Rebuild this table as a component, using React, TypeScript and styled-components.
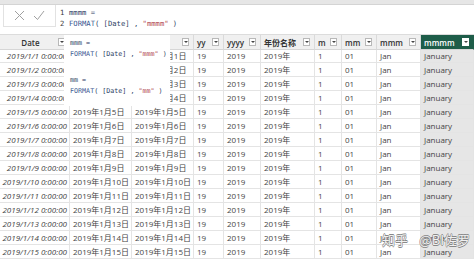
import React from "react";
import styled, { createGlobalStyle } from "styled-components";

const Global = createGlobalStyle`
  html, body { margin: 0; padding: 0; background: #fff; overflow: hidden; }
`;

const Page = styled.div`
  position: relative;
  width: 474px;
  height: 259px;
  overflow: hidden;
  background: #fff;
  font-family: "Open Sans", "Noto Sans CJK SC", sans-serif;
`;

const TopStrip = styled.div`
  height: 4px;
  background: #e6e6e6;
  border-bottom: 1px solid #d4d4d4;
`;

const FormulaBar = styled.div`
  display: flex;
  align-items: flex-start;
  height: 29px;
  background: #fff;
`;

const ActionBox = styled.div`
  margin: 0 0 0 3px;
  width: 51px;
  height: 21px;
  border: 1px solid #e2e2e2;
  border-top: none;
  display: flex;
  align-items: center;
  justify-content: center;
  gap: 8px;
`;

const Code = styled.div`
  margin-left: 4px;
  padding-top: 2px;
  font-family: "DejaVu Sans Mono", "Liberation Mono", monospace;
  font-size: 7.2px;
  line-height: 11px;
  color: #2c3e63;
`;

const CodeLine = styled.div`
  display: flex;
  white-space: pre;
`;

const LineNo = styled.span`
  width: 9px;
  color: #3a3a3a;
`;

const Str = styled.span`
  color: #b2474f;
`;

const Fn = styled.span`
  color: #3b5a92;
`;

const Table = styled.div`
  display: grid;
  grid-template-columns: 70px 62px 62px 30px 37px 54px 27px 35px 44px 53px;
  grid-auto-rows: 14px;
  border-top: 1px solid #dcdcdc;
`;

const HeadCell = styled.div<{ $active?: boolean }>`
  height: 15px;
  display: flex;
  align-items: center;
  position: relative;
  padding: 0 4px 0 3px;
  box-sizing: border-box;
  background: ${(p) => (p.$active ? "#1e5d49" : "#f0f0f0")};
  color: ${(p) => (p.$active ? "#fff" : "#333")};
  border-right: 1px solid ${(p) => (p.$active ? "#1e5d49" : "#dadada")};
  border-bottom: 1px solid #d6d6d6;
  font-size: 8px;
  font-weight: 600;
  white-space: nowrap;
  overflow: hidden;
`;

const HeadLabel = styled.span<{ $center?: boolean }>`
  flex: 1;
  text-align: ${(p) => (p.$center ? "center" : "left")};
`;

const Drop = styled.span<{ $active?: boolean }>`
  width: 7px;
  height: 8px;
  box-sizing: border-box;
  border: 1px solid ${(p) => (p.$active ? "#fff" : "#b8b8b8")};
  background: #fff;
  display: flex;
  align-items: center;
  justify-content: center;
  flex: none;
  &::after {
    content: "";
    border-left: 2px solid transparent;
    border-right: 2px solid transparent;
    border-top: 2px solid #444;
  }
`;

const Cell = styled.div<{ $right?: boolean; $italic?: boolean; $active?: boolean }>`
  height: 14px;
  box-sizing: border-box;
  display: flex;
  align-items: center;
  justify-content: ${(p) => (p.$right ? "flex-end" : "flex-start")};
  padding: ${(p) => (p.$right ? "0 2px 0 0" : "0 0 0 3px")};
  border-right: 1px solid #e4e4e4;
  border-bottom: 1px solid #e4e4e4;
  background: ${(p) => (p.$active ? "#e6e6e6" : "#fff")};
  color: #444;
  font-size: 8px;
  font-style: ${(p) => (p.$italic ? "italic" : "normal")};
  white-space: nowrap;
  overflow: hidden;
`;

const Popup = styled.div`
  position: absolute;
  left: 64px;
  top: 35px;
  width: 106px;
  height: 71px;
  background: #fff;
  padding: 3px 0 0 6px;
  box-sizing: border-box;
  font-family: "DejaVu Sans Mono", "Liberation Mono", monospace;
  font-size: 6.7px;
  line-height: 11px;
  color: #2c3e63;
  display: flex;
  flex-direction: column;
  gap: 15px;
  white-space: pre;
`;

const Watermark = styled.div`
  position: absolute;
  left: 382px;
  width: 88px;
  top: 232px;
  display: flex;
  justify-content: space-between;
  font-family: "Noto Sans CJK SC", sans-serif;
  font-size: 13px;
  line-height: 16px;
  color: rgba(255, 255, 255, 0.9);
  text-shadow: 0.6px 0 0 #888, -0.6px 0 0 #888, 0 0.6px 0 #888, 0 -0.6px 0 #888;
  white-space: nowrap;
`;

const headers = ["Date", "", "", "yy", "yyyy", "年份名称", "m", "mm", "mmm", "mmmm"];

const XIcon = () => (
  <svg width="11" height="11" viewBox="0 0 11 11">
    <path d="M1 1 L10 10 M10 1 L1 10" stroke="#a0a0a0" strokeWidth="1" fill="none" />
  </svg>
);

const CheckIcon = () => (
  <svg width="12" height="11" viewBox="0 0 12 11">
    <path d="M1 6 L4.5 9.5 L11 1" stroke="#a0a0a0" strokeWidth="1" fill="none" />
  </svg>
);

export default function App() {
  const rows = Array.from({ length: 15 }, (_, i) => i + 1);
  return (
    <Page>
      <Global />
      <TopStrip />
      <FormulaBar>
        <ActionBox>
          <XIcon />
          <CheckIcon />
        </ActionBox>
        <Code>
          <CodeLine>
            <LineNo>1</LineNo>mmmm =
          </CodeLine>
          <CodeLine>
            <LineNo>2</LineNo>
            <Fn>FORMAT</Fn>( [Date] , <Str>"mmmm"</Str> )
          </CodeLine>
        </Code>
      </FormulaBar>
      <Table>
        {headers.map((h, i) => (
          <HeadCell key={i} $active={i === 9}>
            <HeadLabel $center={i === 0}>{h}</HeadLabel>
            <Drop $active={i === 9} />
          </HeadCell>
        ))}
        {rows.map((d) => (
          <React.Fragment key={d}>
            <Cell $right $italic>{`2019/1/${d} 0:00:00`}</Cell>
            <Cell>{`2019年1月${d}日`}</Cell>
            <Cell>{`2019年1月${d}日`}</Cell>
            <Cell>19</Cell>
            <Cell>2019</Cell>
            <Cell>2019年</Cell>
            <Cell>1</Cell>
            <Cell>01</Cell>
            <Cell>Jan</Cell>
            <Cell $active>January</Cell>
          </React.Fragment>
        ))}
      </Table>
      <Popup>
        <div>
          <div>mmm =</div>
          <div>
            <Fn>FORMAT</Fn>( [Date] , <Str>"mmm"</Str> )
          </div>
        </div>
        <div>
          <div>mm =</div>
          <div>
            <Fn>FORMAT</Fn>( [Date] , <Str>"mm"</Str> )
          </div>
        </div>
      </Popup>
      <Watermark>
        <span>知乎</span>
        <span>@BI佐罗</span>
      </Watermark>
    </Page>
  );
}
